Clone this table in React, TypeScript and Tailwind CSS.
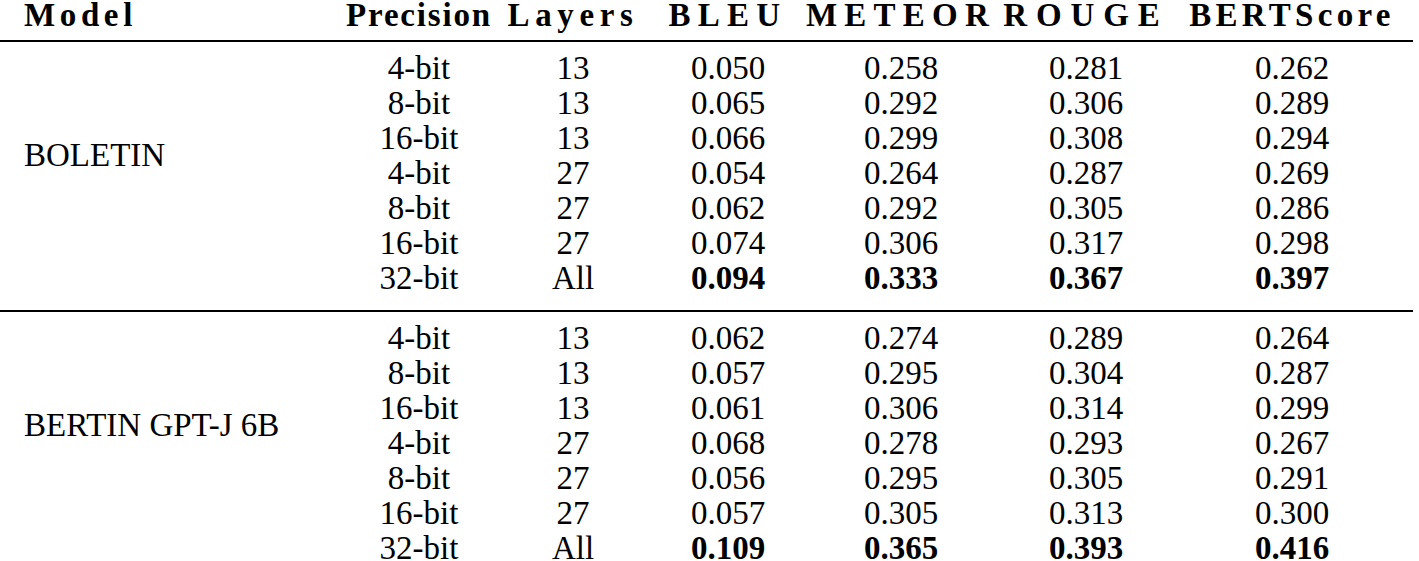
const headers = [
  { label: "Model", cls: "justify-start pl-[24px] tracking-[0.14em]" },
  { label: "Precision", cls: "justify-center tracking-[0.055em]" },
  { label: "Layers", cls: "justify-center tracking-[0.17em]" },
  { label: "BLEU", cls: "justify-center tracking-[0.22em]" },
  { label: "METEOR", cls: "justify-center tracking-[0.22em]" },
  { label: "ROUGE", cls: "justify-center tracking-[0.27em]" },
  { label: "BERTScore", cls: "justify-center tracking-[0.13em]" },
]

type Row = [string, string, string, string, string, string]

const groups: { model: string; pad: string; rows: Row[] }[] = [
  {
    model: "BOLETIN",
    pad: "pt-[8px] pb-[15px]",
    rows: [
      ["4-bit", "13", "0.050", "0.258", "0.281", "0.262"],
      ["8-bit", "13", "0.065", "0.292", "0.306", "0.289"],
      ["16-bit", "13", "0.066", "0.299", "0.308", "0.294"],
      ["4-bit", "27", "0.054", "0.264", "0.287", "0.269"],
      ["8-bit", "27", "0.062", "0.292", "0.305", "0.286"],
      ["16-bit", "27", "0.074", "0.306", "0.317", "0.298"],
      ["32-bit", "All", "0.094", "0.333", "0.367", "0.397"],
    ],
  },
  {
    model: "BERTIN GPT-J 6B",
    pad: "pt-[8px]",
    rows: [
      ["4-bit", "13", "0.062", "0.274", "0.289", "0.264"],
      ["8-bit", "13", "0.057", "0.295", "0.304", "0.287"],
      ["16-bit", "13", "0.061", "0.306", "0.314", "0.299"],
      ["4-bit", "27", "0.068", "0.278", "0.293", "0.267"],
      ["8-bit", "27", "0.056", "0.295", "0.305", "0.291"],
      ["16-bit", "27", "0.057", "0.305", "0.313", "0.300"],
      ["32-bit", "All", "0.109", "0.365", "0.393", "0.416"],
    ],
  },
]

const cols = "grid grid-cols-[340px_158px_150px_160px_186px_184px_228px]"

export default function App() {
  return (
    <div
      className="w-[1419px] h-[561px] overflow-hidden bg-white text-black"
      style={{ fontFamily: '"Liberation Serif", "Times New Roman", serif' }}
    >
      <div className="w-[1413px]">
        {/* header */}
        <div className={`${cols} h-[30px] text-[33px] leading-[28px] font-bold`}>
          {headers.map((h) => (
            <div key={h.label} className={`flex items-center ${h.cls}`}>
              {h.label}
            </div>
          ))}
        </div>

        {groups.map((g, gi) => (
          <div key={g.model}>
            <div className={`${gi === 0 ? "mt-[10px]" : ""} h-[2px] bg-black`} />
            <div className={`${cols} ${g.pad} text-[33px] leading-[26px]`}>
              <div className="row-span-7 pl-[24px] pt-[92px]">{g.model}</div>
              {g.rows.map((r, i) => {
                const best = i === g.rows.length - 1
                return r.map((cell, j) => (
                  <div
                    key={`${i}-${j}`}
                    className={`flex h-[35px] items-center justify-center ${best && j > 1 ? "font-bold" : ""}`}
                  >
                    {cell}
                  </div>
                ))
              })}
            </div>
          </div>
        ))}
      </div>
    </div>
  )
}
